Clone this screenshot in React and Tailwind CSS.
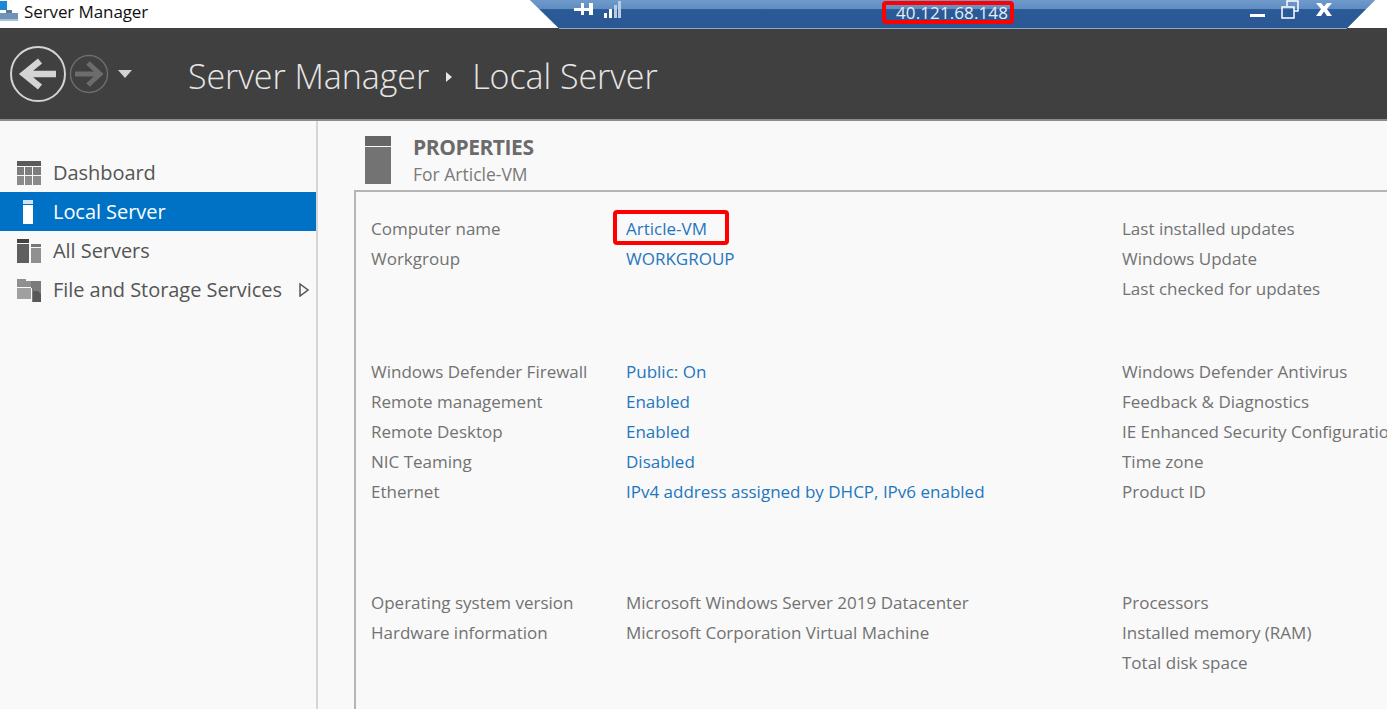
import React from "react";

const font = "font-['Open_Sans','Noto_Sans',sans-serif]";

const sections = [
  {
    gap: "mt-[22px]",
    rows: [
      ["Computer name", "Article-VM", "Last installed updates"],
      ["Workgroup", "WORKGROUP", "Windows Update"],
      ["", "", "Last checked for updates"],
    ],
  },
  {
    gap: "mt-[53px]",
    rows: [
      ["Windows Defender Firewall", "Public: On", "Windows Defender Antivirus"],
      ["Remote management", "Enabled", "Feedback & Diagnostics"],
      ["Remote Desktop", "Enabled", "IE Enhanced Security Configuration"],
      ["NIC Teaming", "Disabled", "Time zone"],
      ["Ethernet", "IPv4 address assigned by DHCP, IPv6 enabled", "Product ID"],
    ],
  },
  {
    gap: "mt-[81px]",
    plain: true,
    rows: [
      ["Operating system version", "Microsoft Windows Server 2019 Datacenter", "Processors"],
      ["Hardware information", "Microsoft Corporation Virtual Machine", "Installed memory (RAM)"],
      ["", "", "Total disk space"],
    ],
  },
];

const AppIcon = () => (
  <svg width="20" height="22" viewBox="0 0 20 22" className="shrink-0">
    <rect x="0" y="0" width="7" height="9" fill="#1e88d8" />
    <rect x="0" y="12" width="18" height="8" fill="#6f94b5" />
    <rect x="6" y="9" width="6" height="3" fill="#5a7d9c" />
    <rect x="0" y="18" width="18" height="2" fill="#a9c0d4" />
  </svg>
);

const BackIcon = () => (
  <svg width="58" height="58" viewBox="0 0 58 58">
    <circle cx="29" cy="29" r="27" fill="none" stroke="#d4d4d4" strokeWidth="2" />
    <path d="M16 29 H47 M31 16 L15 29 L31 42" fill="none" stroke="#d4d4d4" strokeWidth="6.5" />
  </svg>
);

const ForwardIcon = () => (
  <svg width="40" height="40" viewBox="0 0 40 40">
    <circle cx="20" cy="20" r="18.5" fill="none" stroke="#6c6c6c" strokeWidth="1.5" />
    <path d="M30 20 H6 M19 9 L31 20 L19 31" fill="none" stroke="#6c6c6c" strokeWidth="5" />
  </svg>
);

const DashboardIcon = () => (
  <svg width="24" height="24" viewBox="0 0 24 24">
    <rect x="0" y="0" width="24" height="5" fill="#5a5a5a" />
    <rect x="0" y="6" width="7" height="8" fill="#7d7d7d" />
    <rect x="8" y="6" width="7" height="8" fill="#7d7d7d" />
    <rect x="16" y="6" width="8" height="8" fill="#7d7d7d" />
    <rect x="0" y="15" width="7" height="9" fill="#8a8a8a" />
    <rect x="8" y="15" width="7" height="9" fill="#8a8a8a" />
    <rect x="16" y="15" width="8" height="9" fill="#8a8a8a" />
  </svg>
);

const LocalIcon = () => (
  <svg width="24" height="24" viewBox="0 0 24 24">
    <rect x="6" y="0" width="10" height="4" fill="#cfe3f4" />
    <rect x="6" y="5" width="10" height="19" fill="#ffffff" />
  </svg>
);

const AllIcon = () => (
  <svg width="24" height="24" viewBox="0 0 24 24">
    <rect x="0" y="0" width="12" height="4" fill="#444444" />
    <rect x="0" y="5" width="12" height="19" fill="#5f5f5f" />
    <rect x="14" y="5" width="10" height="3" fill="#777777" />
    <rect x="14" y="9" width="10" height="15" fill="#909090" />
  </svg>
);

const FilesIcon = () => (
  <svg width="24" height="24" viewBox="0 0 24 24">
    <path d="M0 1 H9 V3 H17 V9 H0 Z" fill="#8f8f8f" />
    <rect x="0" y="10" width="14" height="11" fill="#a0a0a0" />
    <path d="M14 3 H24 V24 H15 V10 H14 Z" fill="#7b7b7b" />
    <path d="M16 13 H21 L24 16 V24 H16 Z" fill="#585858" />
  </svg>
);

const navItems = [
  { label: "Dashboard", icon: <DashboardIcon /> },
  { label: "Local Server", icon: <LocalIcon />, active: true },
  { label: "All Servers", icon: <AllIcon /> },
  { label: "File and Storage Services", icon: <FilesIcon />, arrow: true },
];

const ConnectionBar = () => (
  <div className="absolute left-[530px] top-0 z-10 flex h-[29px] w-[845px] [clip-path:polygon(0_0,100%_0,96.6%_100%,3.5%_100%)] flex-col bg-[#8fa9c9] pb-px">
    <div className="relative flex-1 bg-[linear-gradient(#6f9acb_0,#5f8cc2_33%,#2a5a97_34%,#2a5895_100%)]">
      <svg width="60" height="20" viewBox="0 0 60 20" className="absolute left-[42px] top-0">
        <path d="M2 8 H9 V3 H12 V8 H17 V3 H21 V15 H17 V11 H12 V15 H9 V11 H2 Z" fill="#ffffff" />
        <rect x="32" y="13" width="3" height="5" fill="#ffffff" />
        <rect x="37" y="9" width="3" height="9" fill="#ffffff" />
        <rect x="42" y="5" width="3" height="13" fill="#b9cbe0" />
        <rect x="46" y="1" width="3" height="17" fill="#b9cbe0" />
      </svg>
      <div className="relative ml-[352px] mt-px flex h-[23px] w-[132px] items-center justify-center rounded-sm border-4 border-[#ff0000] pl-2 text-[17px] tracking-[0.1px] text-[#e8eef5]">
        40.121.68.148
      </div>
      <svg width="110" height="20" viewBox="0 0 110 20" className="absolute left-[718px] top-0">
        <rect x="2" y="14" width="15" height="3" fill="#ffffff" />
        <path d="M39 6 V1 H50 V11 H46" fill="none" stroke="#ffffff" strokeWidth="1.5" />
        <rect x="34" y="7" width="12" height="11" fill="none" stroke="#ffffff" strokeWidth="1.5" />
        <path d="M68 3 H73 L76 6.5 L79 3 H84 L79 9 L84 16 H79 L76 11.5 L73 16 H68 L73 9 Z" fill="#ffffff" />
      </svg>
    </div>
  </div>
);

const Row = ({ row, plain, first }) => (
  <div className="grid h-[30px] grid-cols-[255px_496px_1fr] items-center whitespace-nowrap text-[17px]">
    <div className="text-[#727272]">{row[0]}</div>
    <div className={plain ? "text-[#727272]" : "text-[#1f76c0]"}>
      {first ? (
        <span className="relative inline-block">
          {row[1]}
          <span className="absolute -left-[13px] -right-[22px] -top-[6px] -bottom-[3px] rounded-sm border-4 border-[#ff0000]" />
        </span>
      ) : (
        row[1]
      )}
    </div>
    <div className="text-[#727272]">{row[2]}</div>
  </div>
);

export default function App() {
  return (
    <div className={`relative h-[709px] w-[1387px] overflow-hidden bg-[#f9f9f9] ${font}`}>
      <ConnectionBar />

      <div className="flex h-7 items-center gap-1 bg-white pb-1 text-[17px] tracking-[-0.1px] text-[#111111]">
        <AppIcon />
        <span>Server Manager</span>
      </div>

      <div className="flex h-[93px] items-center border-b-2 border-[#8c8c8c] bg-[#404040]">
        <div className="ml-[9px] flex items-center gap-[2px]">
          <BackIcon />
          <ForwardIcon />
          <div className="ml-[7px] h-0 w-0 border-x-[7px] border-t-[8px] border-x-transparent border-t-[#d4d4d4]" />
        </div>
        <div className="ml-[56px] flex items-center pt-[6px] text-[34px] font-light tracking-[-0.05px] text-[#e6e6e6]">
          <span>Server Manager</span>
          <span className="ml-[17px] mr-[20px] h-0 w-0 border-y-[5px] border-l-[6px] border-y-transparent border-l-[#e6e6e6]" />
          <span>Local Server</span>
        </div>
      </div>

      <div className="flex h-[588px]">
        <div className="w-[318px] shrink-0 border-r-2 border-[#d6d6d6] pt-8">
          {navItems.map((item) => (
            <div
              key={item.label}
              className={`flex h-[39px] items-center gap-3 whitespace-nowrap pl-[17px] text-[20px] tracking-[-0.05px] ${
                item.active ? "bg-[#0072c6] text-white" : "text-[#555555]"
              }`}
            >
              {item.icon}
              <span>{item.label}</span>
              {item.arrow && (
                <svg width="10" height="14" viewBox="0 0 10 14" className="ml-[5px]">
                  <path d="M1 1 L9 7 L1 13 Z" fill="none" stroke="#555555" strokeWidth="1.5" />
                </svg>
              )}
            </div>
          ))}
        </div>

        <div className="flex-1 pl-9">
          <div className="flex h-[69px] items-start pt-[15px]">
            <svg width="26" height="48" viewBox="0 0 26 48" className="ml-[11px] shrink-0">
              <rect x="0" y="0" width="26" height="10" fill="#666666" />
              <rect x="0" y="11" width="26" height="37" fill="#737373" />
            </svg>
            <div className="ml-[22px] -mt-[3px] flex flex-col">
              <span className="text-[21px] font-bold leading-7 tracking-[-0.45px] text-[#6b6b6b]">PROPERTIES</span>
              <span className="text-[17.5px] leading-[26px] text-[#7a7a7a]">For Article-VM</span>
            </div>
          </div>

          <div className="h-[520px] border-l-2 border-t-2 border-[#b5b5b5] pl-[15px]">
            {sections.map((s, i) => (
              <div key={i} className={s.gap}>
                {s.rows.map((row, j) => (
                  <Row key={j} row={row} plain={s.plain} first={i === 0 && j === 0} />
                ))}
              </div>
            ))}
          </div>
        </div>
      </div>
    </div>
  );
}
